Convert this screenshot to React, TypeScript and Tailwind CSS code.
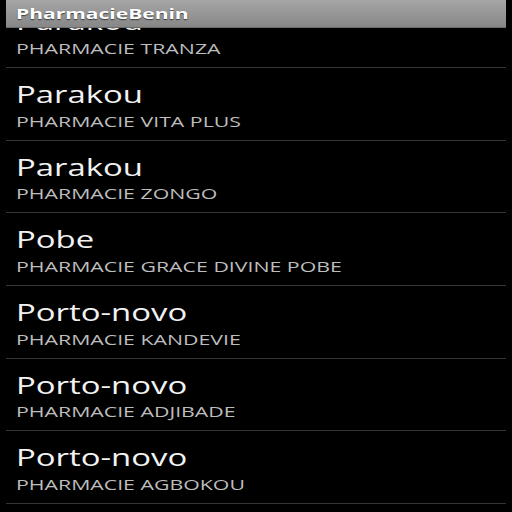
const rows = [
  { city: 'Parakou', name: 'PHARMACIE TRANZA' },
  { city: 'Parakou', name: 'PHARMACIE VITA PLUS' },
  { city: 'Parakou', name: 'PHARMACIE ZONGO' },
  { city: 'Pobe', name: 'PHARMACIE GRACE DIVINE POBE' },
  { city: 'Porto-novo', name: 'PHARMACIE KANDEVIE' },
  { city: 'Porto-novo', name: 'PHARMACIE ADJIBADE' },
  { city: 'Porto-novo', name: 'PHARMACIE AGBOKOU' },
]

export default function App() {
  return (
    <div className="w-[512px] h-[512px] bg-black overflow-hidden" style={{ fontFamily: '"Open Sans", "DejaVu Sans", sans-serif' }}>
      {/* Title bar */}
      <div className="relative z-10 mx-[6px] h-[28px] bg-gradient-to-b from-[#a6a6a6] to-[#878787] border-b border-[#6a6a6a] flex items-center pl-[10px]">
        <span className="inline-block -mt-[1px] origin-left scale-x-[1.4] text-[15px] font-bold leading-none text-white [text-shadow:0_1px_1px_rgba(0,0,0,0.6)]">
          PharmacieBenin
        </span>
      </div>

      {/* List */}
      <div className="h-[484px] overflow-hidden">
        <div className="-mt-[32.7px]">
          {rows.map((r, i) => (
            <div key={i} className="mx-[6px] h-[72.7px] border-b border-[#353535] pl-[10px] pt-[15px]">
              <div className="origin-left scale-x-[1.43] text-[23px] leading-none text-[#f2f2f2]">{r.city}</div>
              <div className="mt-[7.5px] origin-left scale-x-[1.42] text-[15px] leading-none text-[#bdbdbd]">{r.name}</div>
            </div>
          ))}
        </div>
      </div>
    </div>
  )
}
